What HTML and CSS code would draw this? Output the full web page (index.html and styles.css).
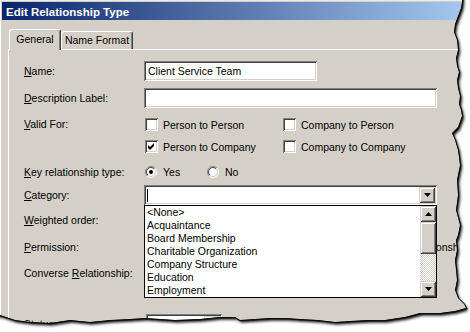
FILE: index.html
```html
<!DOCTYPE html>
<html>
<head>
<meta charset="utf-8">
<title>Edit Relationship Type</title>
<link rel="stylesheet" href="styles.css">
</head>
<body>
<div class="dialog">
  <div class="titlebar">Edit Relationship Type</div>
  <div class="tabs">
    <div class="tab tab-active">General</div>
    <div class="tab tab-name">Name Format</div>
  </div>
  <div class="panel">
    <div class="row row-name">
      <div class="lbl"><u>N</u>ame:</div>
      <div class="field w-name">Client Service Team</div>
    </div>
    <div class="row row-desc">
      <div class="lbl"><u>D</u>escription Label:</div>
      <div class="field w-full"></div>
    </div>
    <div class="valid">
      <div class="lbl lbl-valid"><u>V</u>alid For:</div>
      <div class="checks">
        <div class="chk"><span class="box"></span>Person to Person</div>
        <div class="chk"><span class="box"></span>Company to Person</div>
        <div class="chk"><span class="box"><svg width="9" height="9" viewBox="0 0 9 9"><path d="M1,3 L3,5 L7,1 L7,4 L3,8 L1,6 Z" fill="#000"/></svg></span>Person to Company</div>
        <div class="chk"><span class="box"></span>Company to Company</div>
      </div>
    </div>
    <div class="row row-key">
      <div class="lbl"><u>K</u>ey relationship type:</div>
      <div class="radio radio-yes">
        <svg class="rdo" width="12" height="12" viewBox="0 0 12 12">
          <defs>
            <linearGradient id="ro" x1="0" y1="0" x2="1" y2="1"><stop offset="0.5" stop-color="#808080"/><stop offset="0.5" stop-color="#ffffff"/></linearGradient>
            <linearGradient id="ri" x1="0" y1="0" x2="1" y2="1"><stop offset="0.5" stop-color="#404040"/><stop offset="0.5" stop-color="#d4d0c8"/></linearGradient>
          </defs>
          <circle cx="6" cy="6" r="5.5" fill="none" stroke="url(#ro)"/>
          <circle cx="6" cy="6" r="4.5" fill="#fff" stroke="url(#ri)"/>
          <circle cx="6" cy="6" r="2" fill="#000"/>
        </svg>Yes
      </div>
      <div class="radio">
        <svg class="rdo" width="12" height="12" viewBox="0 0 12 12">
          <circle cx="6" cy="6" r="5.5" fill="none" stroke="url(#ro)"/>
          <circle cx="6" cy="6" r="4.5" fill="#fff" stroke="url(#ri)"/>
        </svg>No
      </div>
    </div>
    <div class="row row-cat">
      <div class="lbl"><u>C</u>ategory:</div>
      <div class="combo w-full">
        <span class="caret"></span>
        <span class="btn"><svg width="7" height="4" viewBox="0 0 7 4"><path d="M0,0H7L3.5,4Z" fill="#000"/></svg></span>
        <div class="droplist">
          <ul class="items">
            <li>&lt;None&gt;</li>
            <li>Acquaintance</li>
            <li>Board Membership</li>
            <li>Charitable Organization</li>
            <li>Company Structure</li>
            <li>Education</li>
            <li>Employment</li>
          </ul>
          <div class="vscroll">
            <span class="sbtn"><svg width="7" height="4" viewBox="0 0 7 4"><path d="M0,4H7L3.5,0Z" fill="#000"/></svg></span>
            <span class="thumb"></span>
            <span class="track"></span>
            <span class="sbtn"><svg width="7" height="4" viewBox="0 0 7 4"><path d="M0,0H7L3.5,4Z" fill="#000"/></svg></span>
          </div>
        </div>
      </div>
    </div>
    <div class="row row-weight">
      <div class="lbl"><u>W</u>eighted order:</div>
      <div class="field w-short"></div>
    </div>
    <div class="row row-perm">
      <div class="lbl"><u>P</u>ermission:</div>
      <div class="field w-perm"></div>
      <span class="side-text">Relationship</span>
    </div>
    <div class="row row-conv">
      <div class="lbl">Converse <u>R</u>elationship:</div>
      <div class="field w-full"></div>
    </div>
    <div class="row row-status">
      <div class="lbl"><u>S</u>tatus:</div>
      <div class="combo w-status">
        <span class="combo-text">Active</span>
        <span class="btn"><svg width="7" height="4" viewBox="0 0 7 4"><path d="M0,0H7L3.5,4Z" fill="#000"/></svg></span>
      </div>
    </div>
  </div>
</div>
<svg class="tear" width="470" height="332" viewBox="0 0 470 332">
  <defs>
    <path id="shape" d="M-6,-6 L462,-6 L462,2 L461,8 L458,16 L455,24 L454,32 L457,40 L458,50 L456,58 L457,66 L459,72 L457,80 L458,88 L460,96 L459,104 L461,110 L462,116 L458,127 L452,133 L455,140 L458,150 L460,165 L457,180 L458,195 L456,210 L460,225 L458,235 L456,240 L457,250 L455,260 L456,270 L457,280 L455,290 L458,298 L464,304 L466,308 L455,311 L440,313 L420,313 L405,317 L385,320 L368,320 L350,321 L335,322 L318,320 L300,319 L285,318 L270,318 L255,319 L240,320 L235,317 L220,317 L200,319 L175,320 L160,319 L145,318 L130,319 L110,320 L90,322 L70,320 L50,323 L30,322 L15,320 L0,315 L-6,315 Z"/>
    <clipPath id="outside">
      <path clip-rule="evenodd" d="M-20,-20 H490 V352 H-20 Z M-6,-6 L462,-6 L462,2 L461,8 L458,16 L455,24 L454,32 L457,40 L458,50 L456,58 L457,66 L459,72 L457,80 L458,88 L460,96 L459,104 L461,110 L462,116 L458,127 L452,133 L455,140 L458,150 L460,165 L457,180 L458,195 L456,210 L460,225 L458,235 L456,240 L457,250 L455,260 L456,270 L457,280 L455,290 L458,298 L464,304 L466,308 L455,311 L440,313 L420,313 L405,317 L385,320 L368,320 L350,321 L335,322 L318,320 L300,319 L285,318 L270,318 L255,319 L240,320 L235,317 L220,317 L200,319 L175,320 L160,319 L145,318 L130,319 L110,320 L90,322 L70,320 L50,323 L30,322 L15,320 L0,315 L-6,315 Z"/>
    </clipPath>
    <filter id="blur" x="-20%" y="-20%" width="140%" height="140%">
      <feGaussianBlur stdDeviation="1.6"/>
    </filter>
    <filter id="blur2" x="-20%" y="-20%" width="140%" height="140%">
      <feGaussianBlur stdDeviation="0.6"/>
    </filter>
  </defs>
  <g clip-path="url(#outside)">
    <rect x="-20" y="-20" width="510" height="372" fill="#fff"/>
    <use href="#shape" fill="#000" filter="url(#blur)" transform="translate(2,2.5)"/>
    <use href="#shape" fill="none" stroke="#111" stroke-width="1.6" filter="url(#blur2)" transform="translate(0.5,0.5)"/>
  </g>
</svg>
</body>
</html>
```
FILE: styles.css
```css
* { box-sizing: border-box; }

body {
  margin: 0;
  width: 470px;
  height: 332px;
  overflow: hidden;
  position: relative;
  background: #fff;
  font-family: "Liberation Sans", Arial, sans-serif;
  font-size: 10.5px;
  color: #000;
}

.dialog {
  width: 470px;
  height: 332px;
  overflow: hidden;
  background: #d4d0c8;
  border-top: 1px solid #ecebe8;
  border-left: 1px solid #fff;
  padding: 1px 0 0 1px;
}

.titlebar {
  height: 18px;
  line-height: 20px;
  padding-left: 4px;
  background: linear-gradient(to right, #0a246a, #a6caf0);
  color: #fff;
  font-weight: bold;
  font-size: 11.5px;
  white-space: nowrap;
}

.tabs {
  display: flex;
  align-items: flex-end;
  height: 20px;
  margin: 9px 0 0 7px;
  position: relative;
  z-index: 1;
}

.tab {
  height: 18px;
  line-height: 17px;
  text-align: center;
  border-top: 1px solid #fff;
  border-left: 1px solid #fff;
  border-right: 1px solid #404040;
  box-shadow: inset -1px 0 0 #808080;
  border-radius: 3px 3px 0 0;
  background: #d4d0c8;
}

.tab-active {
  width: 52px;
  height: 21px;
  line-height: 19px;
  margin-bottom: -1px;
}

.tab-name {
  width: 72px;
}

.panel {
  margin-left: 6px;
  height: 300px;
  border-top: 1px solid #fff;
  border-left: 1px solid #fff;
  padding: 11px 0 0 15px;
}

.row {
  display: flex;
  align-items: center;
  height: 20px;
}

.lbl {
  width: 120px;
  flex: none;
  white-space: nowrap;
}

.row-desc { margin-top: 7px; }
.row-key { margin-top: 6px; height: 19px; }
.row-cat { margin-top: 4px; }
.row-weight { margin-top: 5px; }
.row-perm { margin-top: 7px; }
.row-conv { margin-top: 6px; }
.row-status { margin-top: 31px; }

.field {
  height: 20px;
  line-height: 20px;
  padding: 0 4px;
  background: #fff;
  white-space: nowrap;
  overflow: hidden;
  box-shadow: inset 1px 1px 0 #808080, inset -1px -1px 0 #fff,
              inset 2px 2px 0 #404040, inset -2px -2px 0 #d4d0c8;
}

.w-name { width: 173px; }
.w-full { width: 293px; }
.w-short { width: 120px; }
.w-perm { width: 250px; }
.w-status { width: 76px; margin-left: 2px; }

.side-text {
  margin-left: 15px;
  white-space: nowrap;
}

.valid {
  display: flex;
  margin-top: 7px;
}

.lbl-valid {
  line-height: 19px;
}

.checks {
  display: grid;
  grid-template-columns: 138px auto;
  grid-auto-rows: 19px;
  row-gap: 3px;
}

.chk {
  display: flex;
  align-items: center;
  white-space: nowrap;
}

.box {
  width: 13px;
  height: 13px;
  margin: 0 5px 0 1px;
  background: #fff;
  display: flex;
  align-items: center;
  justify-content: center;
  box-shadow: inset 1px 1px 0 #808080, inset -1px -1px 0 #fff,
              inset 2px 2px 0 #404040, inset -2px -2px 0 #d4d0c8;
}

.radio {
  display: flex;
  align-items: center;
}

.radio-yes { width: 62px; }

.rdo {
  margin: 0 6px 0 1px;
  flex: none;
}

.combo {
  position: relative;
  height: 20px;
  padding: 2px;
  display: flex;
  align-items: center;
  justify-content: space-between;
  background: #fff;
  box-shadow: inset 1px 1px 0 #808080, inset -1px -1px 0 #fff,
              inset 2px 2px 0 #404040, inset -2px -2px 0 #d4d0c8;
}

.caret {
  width: 1px;
  height: 13px;
  margin-left: 1px;
  background: #000;
}

.combo-text {
  padding-left: 2px;
  white-space: nowrap;
}

.btn, .sbtn {
  width: 16px;
  height: 16px;
  flex: none;
  display: flex;
  align-items: center;
  justify-content: center;
  background: #d4d0c8;
  box-shadow: inset 1px 1px 0 #d4d0c8, inset -1px -1px 0 #404040,
              inset 2px 2px 0 #fff, inset -2px -2px 0 #808080;
}

.droplist {
  position: absolute;
  left: 0;
  top: 20px;
  width: 293px;
  height: 93px;
  border: 1px solid #000;
  background: #fff;
  display: flex;
  z-index: 2;
}

.items {
  list-style: none;
  margin: 0;
  padding: 0;
  flex: 1;
}

.items li {
  height: 13px;
  line-height: 13px;
  padding-left: 2px;
  white-space: nowrap;
}

.vscroll {
  width: 16px;
  display: flex;
  flex-direction: column;
}

.thumb {
  height: 32px;
  background: #d4d0c8;
  box-shadow: inset 1px 1px 0 #d4d0c8, inset -1px -1px 0 #404040,
              inset 2px 2px 0 #fff, inset -2px -2px 0 #808080;
}

.track {
  flex: 1;
  background: repeating-conic-gradient(#d4d0c8 0 25%, #fff 0 50%) 0 0 / 2px 2px;
}

.tear {
  position: absolute;
  left: 0;
  top: 0;
  pointer-events: none;
}
```
